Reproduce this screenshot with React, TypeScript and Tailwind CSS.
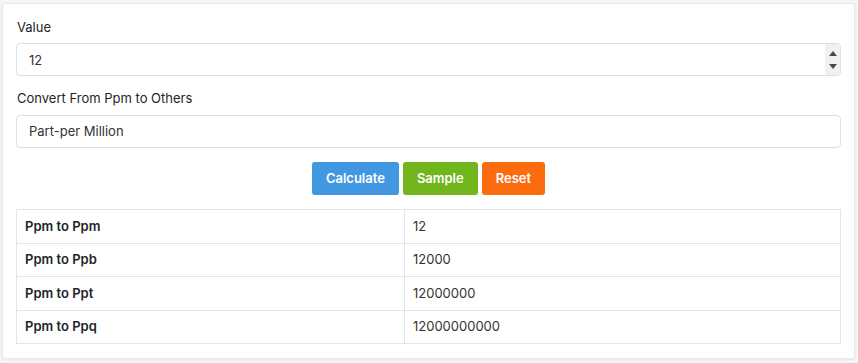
import React, { useState } from "react";

const rows = [
  { label: "Ppm to Ppm", factor: 1 },
  { label: "Ppm to Ppb", factor: 1000 },
  { label: "Ppm to Ppt", factor: 1000000 },
  { label: "Ppm to Ppq", factor: 1000000000 },
];

export default function App() {
  const [value, setValue] = useState("12");
  const n = Number(value) || 0;

  return (
    <div className="min-h-screen bg-[#f4f5f7] pt-[3px] pl-[2px] pr-[3px] font-['Inter',sans-serif] text-[13px] text-[#212529]">
      <div className="bg-white border border-[#e6e8eb] rounded-[3px] shadow-[0_1px_3px_rgba(0,0,0,0.06)] pl-[13px] pr-[13px] pt-[13px] pb-[14px]">
        {/* Value input */}
        <label className="block leading-[20px] mb-[6px] pl-[1px]">Value</label>
        <div className="relative">
          <input
            type="text"
            inputMode="numeric"
            value={value}
            onChange={(e) => setValue(e.target.value)}
            className="block w-full h-[33px] px-3 border border-[#dcdfe3] rounded-[4px] text-[13px] text-[#333] outline-none"
          />
          {/* spinner */}
          <div className="absolute right-[1px] top-[1px] bottom-[1px] w-[15px] bg-[#f1f1f1] rounded-r-[3px] flex flex-col items-center justify-center gap-[8px]">
            <svg width="8" height="5" viewBox="0 0 8 5"><path d="M0 5 L4 0 L8 5 Z" fill="#4a4a4a" /></svg>
            <svg width="8" height="5" viewBox="0 0 8 5"><path d="M0 0 L8 0 L4 5 Z" fill="#4a4a4a" /></svg>
          </div>
        </div>

        {/* From unit */}
        <label className="block leading-[20px] mt-[12px] mb-[7px] pl-[1px]">Convert From Ppm to Others</label>
        <div className="h-[33px] px-3 border border-[#dcdfe3] rounded-[4px] flex items-center text-[#333]">
          Part-per Million
        </div>

        {/* Actions */}
        <div className="flex justify-center gap-[4px] mt-[14px]">
          <button className="h-[33px] px-[14px] rounded-[3px] bg-[#4198e0] text-white font-semibold">Calculate</button>
          <button className="h-[33px] px-[14px] rounded-[3px] bg-[#71b61c] text-white font-semibold">Sample</button>
          <button className="h-[33px] px-[14px] rounded-[3px] bg-[#fa6c0e] text-white font-semibold">Reset</button>
        </div>

        {/* Results */}
        <table className="w-full mt-[14px] border-collapse">
          <tbody>
            {rows.map((r) => (
              <tr key={r.label}>
                <td className="w-[388px] border border-[#e3e5e8] px-2 h-[33.5px] font-semibold">{r.label}</td>
                <td className="border border-[#e3e5e8] px-2 h-[33.5px] text-[#333]">{n * r.factor}</td>
              </tr>
            ))}
          </tbody>
        </table>
      </div>
    </div>
  );
}
